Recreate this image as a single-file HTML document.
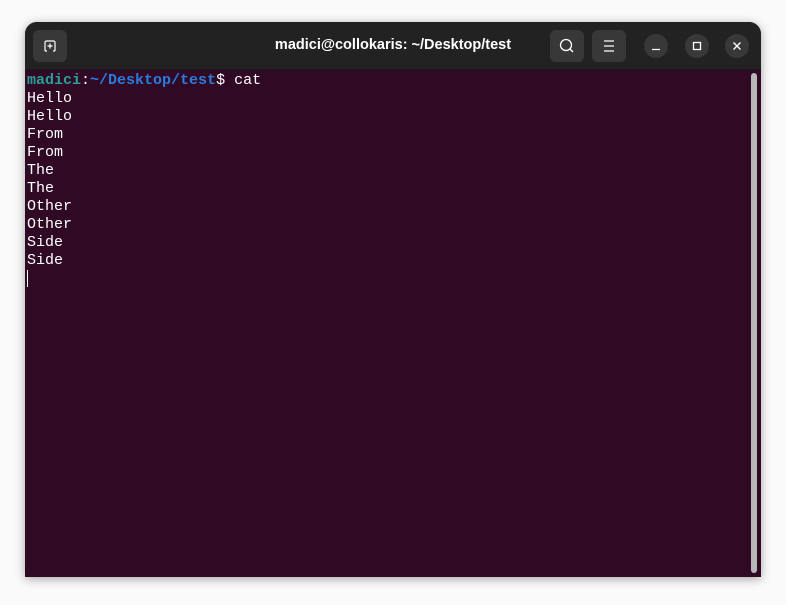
<!DOCTYPE html>
<html><head><style>
body{margin:0;width:786px;height:605px;background:#fafafa;position:relative;overflow:hidden;font-family:"Liberation Sans",sans-serif}
.win{position:absolute;left:25px;top:22px;width:736px;height:555px;border-radius:12px 12px 0 0;overflow:hidden;box-shadow:0 2px 10px rgba(0,0,0,.35);background:#300a24}
.hdr{position:absolute;left:0;top:0;width:736px;height:47px;background:#222222;border-bottom:1px solid #1a1a1a}
.btn{position:absolute;top:8px;width:34px;height:32px;border-radius:6px;background:#383838}
.c{position:absolute;top:12px;width:24px;height:24px;border-radius:50%;background:#383838}
.title{position:absolute;left:0;width:736px;top:15px;text-align:center;color:#fff;font-weight:bold;font-size:14.5px}
.term{position:absolute;left:2px;top:50px;font-family:"Liberation Mono",monospace;font-size:15px;line-height:18px;color:#fff;white-space:pre}
.sb{position:absolute;left:726px;top:51px;width:6px;height:500px;border-radius:3px;background:#b8b8b8}
</style></head><body>
<div class="win">
<div class="hdr">
<div class="btn" style="left:8px"><svg width="34" height="32"><path d="M12 21V12.5a1.5 1.5 0 0 1 1.5-1.5h7a1.5 1.5 0 0 1 1.5 1.5V21M14 21h-2M22 21h-2M17 13.5v5M14.5 16h5" stroke="#fff" stroke-width="1.2" fill="none"/></svg></div>
<div class="title">madici@collokaris: ~/Desktop/test</div>
<div class="btn" style="left:525px"><svg width="34" height="32"><circle cx="16" cy="15" r="5.5" stroke="#fff" stroke-width="1.3" fill="none"/><path d="M20 19l3 3" stroke="#fff" stroke-width="1.4"/></svg></div>
<div class="btn" style="left:567px"><svg width="34" height="32"><path d="M12 11h10M12 16h10M12 21h10" stroke="#fff" stroke-width="1.2"/></svg></div>
<div class="c" style="left:619px"><svg width="24" height="24"><path d="M8 15.5h8" stroke="#fff" stroke-width="1.3"/></svg></div>
<div class="c" style="left:660px"><svg width="24" height="24"><rect x="8.5" y="8.5" width="7" height="7" stroke="#fff" stroke-width="1.3" fill="none"/></svg></div>
<div class="c" style="left:700px"><svg width="24" height="24"><path d="M8.5 8.5l7 7M15.5 8.5l-7 7" stroke="#fff" stroke-width="1.4"/></svg></div>
</div>
<div class="term"><b style="color:#2aa198">madici</b>:<b style="color:#2a7bde">~/Desktop/test</b>$ cat
Hello
Hello
From
From
The
The
Other
Other
Side
Side
<span style="display:inline-block;width:1px;height:17px;background:#fff;vertical-align:top"></span></div>
<div class="sb"></div>
</div>
</body></html>
